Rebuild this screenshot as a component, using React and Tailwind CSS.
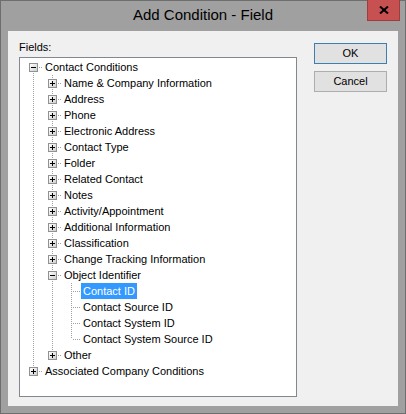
import React from "react";

// Tree rows: guides = which ancestor levels keep a vertical line running through this row
const rows = [
  { label: "Contact Conditions", level: 0, box: "minus", up: false, down: true, guides: [] },
  { label: "Name & Company Information", level: 1, box: "plus", up: true, down: true, guides: [true] },
  { label: "Address", level: 1, box: "plus", up: true, down: true, guides: [true] },
  { label: "Phone", level: 1, box: "plus", up: true, down: true, guides: [true] },
  { label: "Electronic Address", level: 1, box: "plus", up: true, down: true, guides: [true] },
  { label: "Contact Type", level: 1, box: "plus", up: true, down: true, guides: [true] },
  { label: "Folder", level: 1, box: "plus", up: true, down: true, guides: [true] },
  { label: "Related Contact", level: 1, box: "plus", up: true, down: true, guides: [true] },
  { label: "Notes", level: 1, box: "plus", up: true, down: true, guides: [true] },
  { label: "Activity/Appointment", level: 1, box: "plus", up: true, down: true, guides: [true] },
  { label: "Additional Information", level: 1, box: "plus", up: true, down: true, guides: [true] },
  { label: "Classification", level: 1, box: "plus", up: true, down: true, guides: [true] },
  { label: "Change Tracking Information", level: 1, box: "plus", up: true, down: true, guides: [true] },
  { label: "Object Identifier", level: 1, box: "minus", up: true, down: true, guides: [true] },
  { label: "Contact ID", level: 2, up: true, down: true, guides: [true, true], selected: true },
  { label: "Contact Source ID", level: 2, up: true, down: true, guides: [true, true] },
  { label: "Contact System ID", level: 2, up: true, down: true, guides: [true, true] },
  { label: "Contact System Source ID", level: 2, up: true, down: false, guides: [true, true] },
  { label: "Other", level: 1, box: "plus", up: true, down: false, guides: [true] },
  { label: "Associated Company Conditions", level: 0, box: "plus", up: true, down: false, guides: [] },
];

const vDots =
  "absolute left-[9px] w-[1px] bg-[repeating-linear-gradient(to_bottom,#a0a0a0_0px,#a0a0a0_1px,transparent_1px,transparent_2px)]";
const hDots =
  "absolute left-[10px] right-0 top-[8px] h-[1px] bg-[repeating-linear-gradient(to_right,transparent_0px,transparent_1px,#a0a0a0_1px,#a0a0a0_2px)]";

function ExpandBox({ kind }) {
  return (
    <span className="absolute left-[5px] top-[4px] w-[9px] h-[9px] border border-[#919191] bg-linear-to-br from-white to-[#cfcfcf]">
      <span className="absolute left-[1px] top-[3px] w-[5px] h-[1px] bg-black" />
      {kind === "plus" && (
        <span className="absolute left-[3px] top-[1px] w-[1px] h-[5px] bg-black" />
      )}
    </span>
  );
}

function TreeRow({ row }) {
  return (
    <div className="h-[16px] flex">
      {row.guides.map((g, i) => (
        <span key={i} className="relative w-[19px] shrink-0">
          {g && <span className={`${vDots} top-0 h-[16px]`} />}
        </span>
      ))}
      <span className="relative w-[19px] shrink-0">
        {row.up && <span className={`${vDots} top-0 h-[8px]`} />}
        {row.down && <span className={`${vDots} top-[8px] h-[8px]`} />}
        <span className={hDots} />
        {row.box && <ExpandBox kind={row.box} />}
      </span>
      <span
        className={`px-[2px] leading-[16px] whitespace-nowrap ${
          row.selected ? "bg-[#3399ff] text-white" : "text-black"
        }`}
      >
        {row.label}
      </span>
    </div>
  );
}

export default function App() {
  return (
    <div className="w-[406px] h-[414px] bg-[#a0a0a0] border border-[#6e6e6e] flex flex-col font-['Liberation_Sans',Arial,sans-serif] select-none">
      {/* title bar */}
      <div className="relative h-[30px] flex justify-center shrink-0">
        <span className="text-[15px] leading-[28px] text-black">Add Condition - Field</span>
        <button className="absolute top-[-1px] right-[5px] w-[33px] h-[21px] bg-[#c75050] border border-t-0 border-[#9f3d3d] flex items-center justify-center">
          <svg width="10" height="8" viewBox="0 0 10 8">
            <path d="M1 0.5 L9 7.5 M9 0.5 L1 7.5" stroke="#000" strokeWidth="2" />
          </svg>
        </button>
      </div>

      {/* client area */}
      <div className="mx-[7px] h-[375px] shrink-0 bg-[#f0f0f0] flex gap-[17px] pl-[11px] pt-[9px] text-[11px]">
        <div className="w-[278px] flex flex-col">
          <span className="leading-[14px] text-black">Fields:</span>
          <div className="mt-[3px] h-[340px] border border-[#828790] bg-white p-[1px] pl-[4px]">
            {rows.map((row) => (
              <TreeRow key={row.label} row={row} />
            ))}
          </div>
        </div>

        <div className="mt-[3px] w-[73px] flex flex-col gap-[7px]">
          <button className="h-[21px] border border-[#3c7fb1] bg-[#e1e1e1] leading-[13px] text-black">
            OK
          </button>
          <button className="h-[21px] border border-[#adadad] bg-[#e1e1e1] leading-[13px] text-black">
            Cancel
          </button>
        </div>
      </div>
    </div>
  );
}
